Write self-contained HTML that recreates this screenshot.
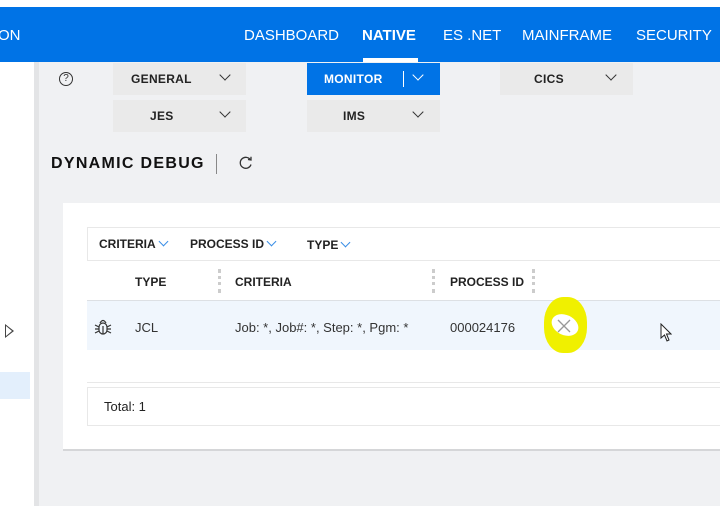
<!DOCTYPE html>
<html><head><style>
*{margin:0;padding:0;box-sizing:border-box}
body{width:720px;height:506px;overflow:hidden;background:#f0f1f3;font-family:"Liberation Sans",sans-serif;position:relative}
.a{position:absolute}
.nav{left:0;top:7px;width:720px;height:55px;background:#0073e6;color:#fff;font-size:15px}
.nav span{position:absolute;top:20px}
.dd{position:absolute;height:32px;width:133px;background:#eaeaea;font-size:12px;font-weight:bold;color:#222;letter-spacing:.3px}
.dd b{position:absolute;top:9px}
.dd i{position:absolute;top:8px;width:8px;height:8px;border-right:1.3px solid #333;border-bottom:1.3px solid #333;transform:rotate(45deg)}
.th{font-size:12px;font-weight:bold;color:#222;position:absolute}
.dots{position:absolute;width:3px;height:24px;border-left:3px dotted #ccc}
.chev{display:inline-block;width:7px;height:7px;border-right:1.2px solid #3a8ee6;border-bottom:1.2px solid #3a8ee6;transform:rotate(45deg);margin-left:4px;position:relative;top:-3px}
</style></head><body>
<div class="a" style="left:0;top:0;width:720px;height:7px;background:#fff"></div>
<div class="a nav">
<span style="left:-2px">ON</span>
<span style="left:244px">DASHBOARD</span>
<span style="left:362px;font-weight:bold">NATIVE</span>
<span style="left:443px">ES .NET</span>
<span style="left:522px">MAINFRAME</span>
<span style="left:636px">SECURITY</span>
<div class="a" style="left:363px;top:51px;width:55px;height:4px;background:#fff"></div>
</div>
<div class="a" style="left:0;top:62px;width:34px;height:444px;background:#fff"></div>
<div class="a" style="left:34px;top:62px;width:5px;height:444px;background:#e3e4e6"></div>
<div class="a" style="left:0;top:372px;width:30px;height:27px;background:#e3effc"></div>
<div class="a" style="left:5px;top:324px;width:0;height:0;border-left:9px solid #444;border-top:7px solid transparent;border-bottom:7px solid transparent"></div>
<div class="a" style="left:6px;top:326px;width:0;height:0;border-left:6px solid #fff;border-top:5px solid transparent;border-bottom:5px solid transparent"></div>
<div class="a" style="left:59px;top:72px;width:14px;height:14px;border:1.3px solid #333;border-radius:50%;font-size:10px;text-align:center;line-height:12px;color:#333">?</div>
<div class="dd" style="left:113px;top:63px"><b style="left:18px">GENERAL</b><i style="left:108px"></i></div>
<div class="dd" style="left:307px;top:63px;background:#0073e6;color:#fff"><b style="left:17px">MONITOR</b><div class="a" style="left:96px;top:8px;width:1px;height:16px;background:#fff"></div><i style="left:107px;border-color:#fff"></i></div>
<div class="dd" style="left:500px;top:63px"><b style="left:34px">CICS</b><i style="left:107px"></i></div>
<div class="dd" style="left:113px;top:100px"><b style="left:37px">JES</b><i style="left:108px"></i></div>
<div class="dd" style="left:307px;top:100px"><b style="left:36px">IMS</b><i style="left:107px"></i></div>
<div class="a" style="left:51px;top:155px;font-size:16px;font-weight:bold;color:#111;letter-spacing:1.3px">DYNAMIC DEBUG</div>
<div class="a" style="left:216px;top:154px;width:1px;height:20px;background:#888"></div>
<svg class="a" style="left:238px;top:155px" width="16" height="16" viewBox="0 0 16 16"><path d="M12.5 5 A5.5 5.5 0 1 0 13 9.5" fill="none" stroke="#333" stroke-width="1.3"/><path d="M10 4.5 L13 5 L13 1.8" fill="none" stroke="#333" stroke-width="1.3"/></svg>
<div class="a" style="left:63px;top:203px;width:657px;height:248px;background:#fff;border-bottom:2px solid #d5d6d8"></div>
<div class="a" style="left:87px;top:227px;width:640px;height:34px;border:1px solid #e8e8e8"></div>
<div class="th" style="left:99px;top:237px">CRITERIA<span class="chev"></span></div>
<div class="th" style="left:190px;top:237px">PROCESS ID<span class="chev"></span></div>
<div class="th" style="left:307px;top:238px">TYPE<span class="chev"></span></div>
<div class="th" style="left:135px;top:275px">TYPE</div>
<div class="dots" style="left:218px;top:269px"></div>
<div class="th" style="left:235px;top:275px">CRITERIA</div>
<div class="dots" style="left:432px;top:269px"></div>
<div class="th" style="left:450px;top:275px">PROCESS ID</div>
<div class="dots" style="left:532px;top:269px"></div>
<div class="a" style="left:87px;top:300px;width:640px;height:1px;background:#dde0e4"></div>
<div class="a" style="left:87px;top:301px;width:640px;height:49px;background:#f0f6fd"></div>
<svg class="a" style="left:94px;top:318px" width="18" height="18" viewBox="0 0 18 18" fill="none" stroke="#333" stroke-width="1.2"><path d="M6 5 Q9 0 12 5"/><rect x="5" y="5" width="8" height="11" rx="4"/><path d="M9 8v8M1 7l4 2M17 7l-4 2M1 11h4M17 11h-4M1 15l4-2M17 15l-4-2"/></svg>
<div class="a" style="left:135px;top:320px;font-size:13px;color:#333">JCL</div>
<div class="a" style="left:235px;top:320px;font-size:13px;color:#333">Job: *, Job#: *, Step: *, Pgm: *</div>
<div class="a" style="left:450px;top:320px;font-size:13px;color:#333">000024176</div>
<div class="a" style="left:544px;top:297px;width:43px;height:56px;background:#f0f000;border-radius:45%"></div>
<div class="a" style="left:551px;top:315px;width:28px;height:20px;background:#fff;border-radius:50%;transform:rotate(25deg)"></div>
<svg class="a" style="left:557px;top:319px" width="14" height="14"><path d="M1 1L13 13M13 1L1 13" stroke="#999" stroke-width="1.3"/></svg>
<svg class="a" style="left:660px;top:323px" width="12" height="20" viewBox="0 0 12 20"><path d="M1 1 L1 15 L4.5 12 L7 18 L9 17 L6.5 11 L11 11 Z" fill="#fff" stroke="#222" stroke-width="1"/></svg>
<div class="a" style="left:87px;top:382px;width:640px;height:1px;background:#e8e8e8"></div>
<div class="a" style="left:87px;top:387px;width:640px;height:39px;border:1px solid #e8e8e8"></div>
<div class="a" style="left:104px;top:399px;font-size:13px;color:#222">Total: 1</div>
</body></html>
